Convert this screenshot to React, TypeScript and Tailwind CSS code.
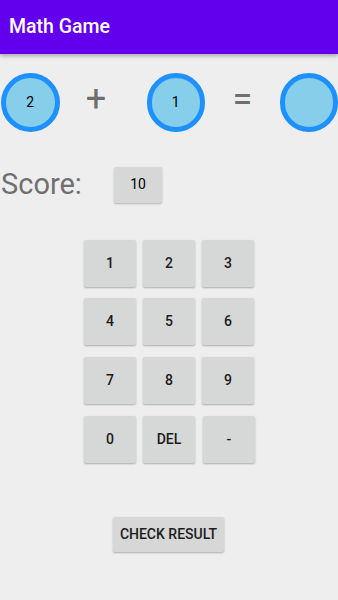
import React from 'react'

// ── Sub-components ─────────────────────────────────────────────────────────

function Bubble({ value }: { value?: string }) {
  return (
    <div className="w-[58.5px] h-[58.5px] flex-shrink-0 rounded-full border-[5px] border-[#1e90ff] bg-[#87ceeb] flex items-center justify-center text-[14px] text-black">
      {value}
    </div>
  )
}

function Key({ label, className = '' }: { label: string; className?: string }) {
  return (
    <button
      className={`h-[47px] w-[52px] rounded-[2px] bg-[#d6d7d7] shadow-[0_1px_2px_rgba(0,0,0,0.28)] text-[14px] font-medium text-[#1c1c1c] ${className}`}
    >
      {label}
    </button>
  )
}

const KEYS = ['1', '2', '3', '4', '5', '6', '7', '8', '9', '0', 'DEL', '-']

// ── Main component ─────────────────────────────────────────────────────────

export default function App() {
  return (
    <div
      className="w-[338px] h-[600px] overflow-hidden bg-[#eeeeee] flex flex-col"
      style={{ fontFamily: 'Roboto, "Noto Sans", sans-serif' }}
    >
      {/* App bar */}
      <div className="h-[54px] flex-shrink-0 bg-[#6200ee] flex items-center pl-[9px] shadow-[0_2px_4px_rgba(0,0,0,0.3)] relative z-10">
        <span className="text-white text-[19.5px] font-medium">Math Game</span>
      </div>

      {/* Equation */}
      <div className="mt-[19px] flex items-center pl-[1px]">
        <Bubble value="2" />
        <div className="w-[88.5px] flex justify-center pr-[14px] pb-[6px]">
          <span className="text-[36px] leading-none text-[#6f6f6f]">+</span>
        </div>
        <Bubble value="1" />
        <div className="w-[76px] flex justify-center pb-[6px]">
          <span className="text-[36px] leading-none text-[#6f6f6f]">=</span>
        </div>
        <Bubble />
      </div>

      {/* Score */}
      <div className="mt-[35px] flex items-center pl-[1px]">
        <span className="w-[113px] text-[29px] leading-none text-[#707070]">Score:</span>
        <div className="w-[48px] h-[36px] rounded-[2px] bg-[#d6d7d7] shadow-[0_1px_2px_rgba(0,0,0,0.25)] flex items-center justify-center text-[14px] text-black">
          10
        </div>
      </div>

      {/* Keypad */}
      <div className="mt-[37px] ml-[84px] grid grid-cols-[52px_52px_52px] gap-x-[7px] gap-y-[11.7px] w-max">
        {KEYS.map((k) => (
          <Key key={k} label={k} className={k === '-' ? 'translate-x-[1px]' : ''} />
        ))}
      </div>

      {/* Check */}
      <div className="mt-[54px] ml-[113px]">
        <button className="h-[35px] w-[111px] rounded-[2px] bg-[#d6d7d7] shadow-[0_1px_2px_rgba(0,0,0,0.28)] text-[14px] font-medium text-[#1c1c1c]">
          CHECK RESULT
        </button>
      </div>
    </div>
  )
}
